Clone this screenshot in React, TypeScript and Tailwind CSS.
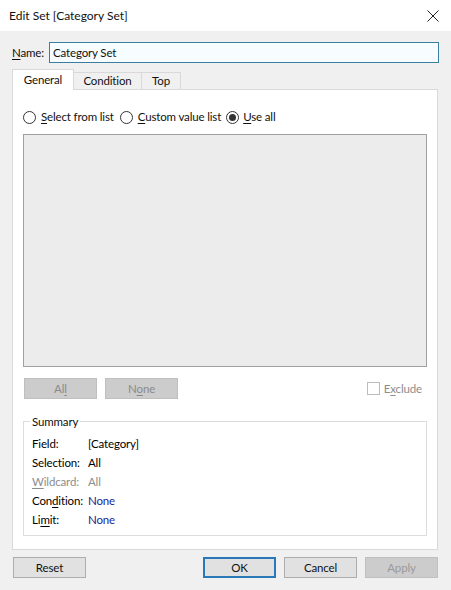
const font = { fontFamily: 'Lato, "Noto Sans", sans-serif' };

const U = ({ children }: { children: string }) => <span className="underline underline-offset-2">{children}</span>;

const Radio = ({ checked }: { checked?: boolean }) => (
  <span className="w-[13px] h-[13px] rounded-full border border-[#333333] bg-white flex items-center justify-center shrink-0">
    {checked && <span className="w-[7px] h-[7px] rounded-full bg-[#333333]" />}
  </span>
);

const SummaryRow = ({ label, value, labelClass = 'text-black', valueClass = 'text-black' }: { label: React.ReactNode; value: string; labelClass?: string; valueClass?: string }) => (
  <div className="h-[19px] flex items-center whitespace-nowrap">
    <span className={`w-[56px] shrink-0 ${labelClass}`}>{label}</span>
    <span className={valueClass}>{value}</span>
  </div>
);

const Btn = ({ children, className = '' }: { children: React.ReactNode; className?: string }) => (
  <div className={`w-[73px] h-[21px] flex items-center justify-center border ${className}`}>{children}</div>
);

export default function App() {
  return (
    <div className="w-[451px] h-[590px] bg-[#f0f0f0] flex flex-col text-[11.5px] tracking-[-0.15px] text-[#111]" style={font}>
      {/* title bar */}
      <div className="h-[31px] bg-white flex items-center justify-between pl-[9px] pr-[9px]">
        <span className="text-[12px] tracking-normal">Edit Set [Category Set]</span>
        <svg width="12" height="12" viewBox="0 0 12 12" className="mr-[3px]">
          <path d="M0.5 0.5 L11.5 11.5 M11.5 0.5 L0.5 11.5" stroke="#222" strokeWidth="1" />
        </svg>
      </div>

      <div className="flex flex-col px-[12px]">
        {/* name */}
        <div className="mt-[11px] h-[21px] flex items-center">
          <span className="w-[37px] shrink-0"><U>N</U>ame:</span>
          <div className="flex-1 h-[21px] border border-[#3a7f9f] bg-[#f7fdff] flex items-center pl-[3px]">Category Set</div>
        </div>

        {/* tabs */}
        <div className="mt-[6px] flex items-end h-[20px]">
          <div className="w-[62px] h-[21px] -mb-px bg-white border border-b-0 border-[#d9d9d9] flex items-center justify-center relative z-10">General</div>
          <div className="w-[68px] h-[17px] bg-[#f0f0f0] border border-b-0 border-l-0 border-[#d9d9d9] flex items-center justify-center">Condition</div>
          <div className="w-[39px] h-[17px] bg-[#f0f0f0] border border-b-0 border-l-0 border-[#d9d9d9] flex items-center justify-center">Top</div>
        </div>

        {/* panel */}
        <div className="mr-px h-[461px] bg-white border border-[#d9d9d9] flex flex-col px-[10px]">
          <div className="mt-[19px] h-[16px] flex items-center whitespace-nowrap">
            <Radio />
            <span className="ml-[5px] mr-[6px]"><U>S</U>elect from list</span>
            <Radio />
            <span className="ml-[5px] mr-[5px]"><U>C</U>ustom value list</span>
            <Radio checked />
            <span className="ml-[4px]"><U>U</U>se all</span>
          </div>

          <div className="mt-[9px] h-[233px] bg-[#ececec] border border-[#a0a0a0]" />

          <div className="mt-[11px] h-[21px] flex items-center">
            <Btn className="ml-px bg-[#cccccc] border-[#bfbfbf] text-[#8a8a8a]">Al<U>l</U></Btn>
            <Btn className="ml-[8px] bg-[#cccccc] border-[#bfbfbf] text-[#8a8a8a]">N<U>o</U>ne</Btn>
            <div className="ml-auto mr-[5px] flex items-center text-[#8d8d8d]">
              <span className="w-[13px] h-[13px] border border-[#bcbcbc] bg-white mr-[4px]" />
              <span>E<U>x</U>clude</span>
            </div>
          </div>

          <div className="mt-[22px] h-[115px] border border-[#dcdcdc] relative flex flex-col pl-[8px] pt-[12px]">
            <span className="absolute -top-[9px] left-[6px] bg-white px-[2px]">Summary</span>
            <SummaryRow label="Field:" value="[Category]" />
            <SummaryRow label="Selection:" value="All" />
            <SummaryRow label={<><U>W</U>ildcard:</>} value="All" labelClass="text-[#8d8d8d]" valueClass="text-[#8d8d8d]" />
            <SummaryRow label={<>Con<U>d</U>ition:</>} value="None" valueClass="text-[#1c1c96]" />
            <SummaryRow label={<>Li<U>m</U>it:</>} value="None" valueClass="text-[#1c1c96]" />
          </div>
        </div>

        {/* bottom buttons */}
        <div className="mt-[7px] flex items-center">
          <Btn className="ml-px bg-[#e1e1e1] border-[#adadad]">Reset</Btn>
          <div className="ml-auto mr-px flex gap-[8px]">
            <Btn className="bg-[#e1e1e1] border-2 border-[#2a78b8]">OK</Btn>
            <Btn className="bg-[#e1e1e1] border-[#adadad]">Cancel</Btn>
            <Btn className="bg-[#cccccc] border-[#bfbfbf] text-[#9a9a9a]">Apply</Btn>
          </div>
        </div>
      </div>
    </div>
  );
}
